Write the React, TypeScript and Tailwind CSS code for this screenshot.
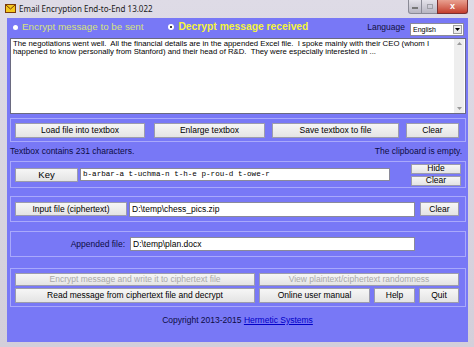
import React from 'react';

const font = "font-['Liberation_Sans',Arial,sans-serif]";

const Btn: React.FC<{ label: string; className?: string; disabled?: boolean }> = ({
  label,
  className = '',
  disabled = false,
}) => (
  <div
    className={`flex items-center justify-center border border-[#9c9cac] bg-gradient-to-b from-[#f6f6f6] to-[#e4e4e4] text-[8.5px] leading-none ${
      disabled ? 'text-[#a8a8a8]' : 'text-black'
    } ${className}`}
  >
    {label}
  </div>
);

const Group: React.FC<{ className?: string; children: React.ReactNode }> = ({ className = '', children }) => (
  <div className={`ml-[3px] mr-[2px] border border-[#a9a9fb] px-[4px] ${className}`}>{children}</div>
);

const Field: React.FC<{ value: string; className?: string; mono?: boolean }> = ({ value, className = '', mono }) => (
  <div
    className={`flex items-center border border-[#8a8a9a] bg-white px-[2px] text-black leading-none ${
      mono ? "font-['Liberation_Mono',monospace] text-[7.6px]" : 'text-[8.5px]'
    } ${className}`}
  >
    {value}
  </div>
);

export default function App() {
  return (
    <div className={`w-[474px] h-[347px] bg-gradient-to-b from-[#dedbe6] to-[#d3cfda] flex flex-col ${font}`}>
      {/* title bar */}
      <div className="h-[18px] flex items-start shrink-0">
        <div className="flex items-center h-[17px] pl-[5px] gap-[3px]">
          <svg width="11" height="9" viewBox="0 0 11 9">
            <rect x="0.5" y="0.5" width="10" height="8" fill="#f4c81c" stroke="#7a3a08" />
            <path d="M1 1 L5.5 5 L10 1" fill="none" stroke="#7a3a08" strokeWidth="1" />
          </svg>
          <span className="font-['Noto_Sans',sans-serif] text-[8px] text-[#1a1a1a] leading-none">
            Email Encryption End-to-End 13.022
          </span>
        </div>
        <div className="ml-auto mr-[6px] flex h-[14px]">
          <div className="w-[14px] h-full border border-[#8a8a96] border-t-0 rounded-bl-[3px] bg-gradient-to-b from-[#e4e2ea] to-[#b8b6c2] flex items-end justify-center pb-[4px]">
            <div className="w-[6px] h-[2px] bg-white border border-[#777]" />
          </div>
          <div className="w-[15px] h-full border-b border-[#8a8a96] bg-gradient-to-b from-[#e4e2ea] to-[#b8b6c2] flex items-center justify-center">
            <div className="w-[6px] h-[5px] border border-[#a0a0a8] bg-transparent" />
          </div>
          <div className="w-[31px] h-full border border-[#7a3030] border-t-0 rounded-br-[3px] bg-gradient-to-b from-[#e8a090] to-[#c43c2c] flex items-center justify-center text-white text-[9px] font-bold leading-none">
            x
          </div>
        </div>
      </div>

      {/* client */}
      <div className="ml-[7px] mr-[6px] h-[324px] bg-[#7878f6] flex flex-col">
        {/* radio row */}
        <div className="h-[18px] flex items-center shrink-0">
          <div className="ml-[6px] w-[5px] h-[5px] rounded-full bg-white" />
          <span className="ml-[4px] text-[9.8px] text-[#d4e27c] leading-none">Encrypt message to be sent</span>
          <div className="ml-[25px] w-[6px] h-[6px] rounded-full bg-white flex items-center justify-center">
            <div className="w-[2px] h-[2px] rounded-full bg-black" />
          </div>
          <span className="ml-[4px] text-[10.3px] font-bold text-[#f4f43c] leading-none">Decrypt message received</span>
          <span className="ml-auto text-[8.5px] text-[#101040] leading-none">Language</span>
          <div className="ml-[5px] mr-[4px] w-[54px] h-[13px] mt-[5px] bg-white border border-[#8a8a9a] flex items-center">
            <span className="ml-[2px] text-[7px] text-black leading-none">English</span>
            <div className="ml-auto mr-[1px] w-[9px] h-[9px] border border-[#a0a0a0] bg-[#ececec] flex items-center justify-center">
              <svg width="5" height="3" viewBox="0 0 5 3">
                <path d="M0 0 H5 L2.5 3 Z" fill="#000" />
              </svg>
            </div>
          </div>
        </div>

        {/* textarea */}
        <div className="mt-[2px] ml-[3px] mr-[2px] h-[76px] bg-white border border-[#6a6a80] flex shrink-0">
          <div className="flex-1 pl-[2px] pt-[1px] text-[7.75px] leading-[8px] text-black">
            The negotiations went well.&nbsp; All the financial details are in the appended Excel file.&nbsp; I spoke mainly with their CEO (whom I happened to know personally from Stanford) and their head of R&amp;D.&nbsp; They were especially interested in ...
          </div>
          <div className="w-[10px] bg-[#eeeeee] flex flex-col items-center justify-between py-[3px] mr-[1px]">
            <svg width="5" height="3" viewBox="0 0 5 3">
              <path d="M0 3 H5 L2.5 0 Z" fill="#9a9a9a" />
            </svg>
            <svg width="5" height="3" viewBox="0 0 5 3">
              <path d="M0 0 H5 L2.5 3 Z" fill="#9a9a9a" />
            </svg>
          </div>
        </div>

        {/* file buttons */}
        <Group className="mt-[4px] h-[24px] flex items-center shrink-0">
          <Btn label="Load file into textbox" className="w-[130px] h-[15px]" />
          <Btn label="Enlarge textbox" className="ml-[9px] w-[111px] h-[15px]" />
          <Btn label="Save textbox to file" className="ml-[7px] w-[127px] h-[15px]" />
          <Btn label="Clear" className="ml-[7px] w-[53px] h-[15px]" />
        </Group>

        {/* status */}
        <div className="h-[19px] flex items-center justify-between pl-[3px] pr-[6px] text-[8.5px] text-[#0c0c44] leading-none shrink-0">
          <span>Textbox contains 231 characters.</span>
          <span>The clipboard is empty.</span>
        </div>

        {/* key */}
        <Group className="h-[27px] flex items-center shrink-0">
          <Btn label="Key" className="w-[63px] h-[14px] text-[9.5px]" />
          <Field mono value="b-arbar-a t-uchma-n t-h-e p-rou-d t-owe-r" className="ml-[2px] w-[310px] h-[13px]" />
          <div className="ml-auto flex flex-col gap-[2px]">
            <Btn label="Hide" className="w-[50px] h-[10px] text-[7.5px]" />
            <Btn label="Clear" className="w-[50px] h-[10px] text-[7.5px]" />
          </div>
        </Group>

        {/* input file */}
        <Group className="mt-[8px] h-[26px] flex items-center shrink-0">
          <Btn label="Input file (ciphertext)" className="w-[112px] h-[14px]" />
          <Field value="D:\temp\chess_pics.zip" className="ml-[2px] w-[286px] h-[15px]" />
          <Btn label="Clear" className="ml-[5px] w-[39px] h-[14px]" />
        </Group>

        {/* appended file */}
        <Group className="mt-[9px] h-[26px] flex items-center shrink-0">
          <div className="w-[110px] text-right text-[8.5px] text-[#0c0c44] leading-none">Appended file:</div>
          <Field value="D:\temp\plan.docx" className="ml-[5px] w-[285px] h-[14px]" />
        </Group>

        {/* actions */}
        <Group className="mt-[11px] h-[39px] flex flex-col justify-center gap-[2px] shrink-0">
          <div className="flex gap-[4px]">
            <Btn disabled label="Encrypt message and write it to ciphertext file" className="w-[240px] h-[13px]" />
            <Btn disabled label="View plaintext/ciphertext randomness" className="w-[200px] h-[13px]" />
          </div>
          <div className="flex">
            <Btn label="Read message from ciphertext file and decrypt" className="w-[240px] h-[15px]" />
            <Btn label="Online user manual" className="ml-[4px] w-[111px] h-[15px]" />
            <Btn label="Help" className="ml-[4px] w-[41px] h-[15px]" />
            <Btn label="Quit" className="ml-[4px] w-[40px] h-[15px]" />
          </div>
        </Group>

        {/* copyright */}
        <div className="mt-[9px] flex justify-center text-[8.5px] text-[#0c0c44] leading-none">
          <span>Copyright 2013-2015&nbsp;</span>
          <span className="text-[#0000c8] underline">Hermetic Systems</span>
        </div>
      </div>
    </div>
  );
}
